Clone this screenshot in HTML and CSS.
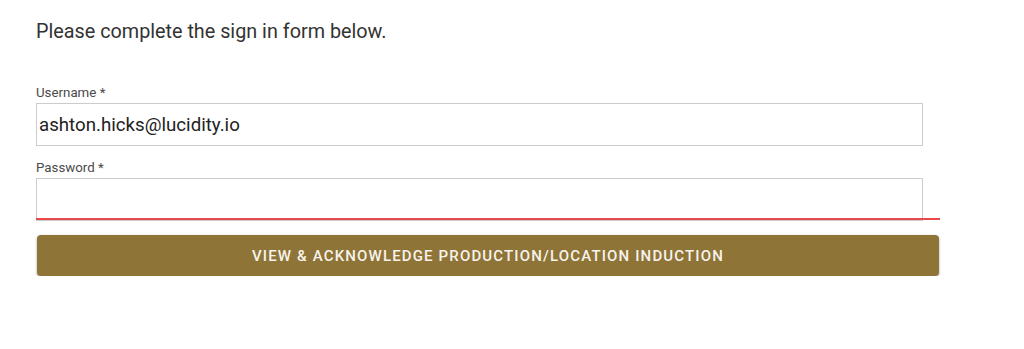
FILE: index.html
```html
<!DOCTYPE html>
<html lang="en">
<head>
<meta charset="utf-8">
<title>Sign in</title>
<link rel="stylesheet" href="styles.css">
</head>
<body>
<main class="page">
  <h1 class="intro">Please complete the sign in form below.</h1>
  <form class="form">
    <div class="field">
      <label class="label" for="username">Username *</label>
      <input class="input" id="username" type="text" value="ashton.hicks@lucidity.io">
    </div>
    <div class="field field-error">
      <label class="label" for="password">Password *</label>
      <div class="input-wrap">
        <input class="input" id="password" type="password" value="">
      </div>
    </div>
    <button class="btn" type="button">VIEW &amp; ACKNOWLEDGE PRODUCTION/LOCATION INDUCTION</button>
  </form>
</main>
</body>
</html>
```

FILE: styles.css
```css
html, body {
  margin: 0;
  padding: 0;
  background: #ffffff;
}

body {
  font-family: Roboto, "Liberation Sans", Arial, sans-serif;
  color: #333333;
}

.page {
  padding: 20px 0 0 36px;
}

.intro {
  margin: 0;
  font-size: 19.8px;
  line-height: 23px;
  font-weight: 400;
  color: #333333;
}

.form {
  display: flex;
  flex-direction: column;
  margin-top: 43px;
}

.field {
  display: flex;
  flex-direction: column;
  gap: 3px;
  margin-bottom: 15px;
}

.field-error {
  margin-bottom: 14px;
}

.label {
  font-size: 13.3px;
  line-height: 14px;
  color: #4a4a4a;
}

.input-wrap {
  position: relative;
}

.input {
  box-sizing: border-box;
  width: 887px;
  height: 43px;
  margin: 0;
  padding: 0 2px;
  border: 1px solid #cccccc;
  border-radius: 0;
  font-family: Roboto, "Liberation Sans", Arial, sans-serif;
  font-size: 18.7px;
  color: #222222;
  background: #ffffff;
  outline: none;
  display: block;
}

.field-error .input-wrap::after {
  content: "";
  position: absolute;
  left: 0;
  bottom: 1px;
  width: 904px;
  height: 2px;
  background: #e8494c;
}

.btn {
  box-sizing: border-box;
  width: 902px;
  height: 41px;
  margin: 0 0 0 1px;
  padding: 0;
  border: none;
  border-radius: 4px;
  background: #8f7437;
  color: #f6f3ec;
  font-family: Roboto, "Liberation Sans", Arial, sans-serif;
  font-size: 15px;
  font-weight: 500;
  letter-spacing: 1.15px;
  box-shadow: 0 1px 3px rgba(0, 0, 0, 0.35);
  cursor: pointer;
  display: flex;
  align-items: center;
  justify-content: center;
}
```
